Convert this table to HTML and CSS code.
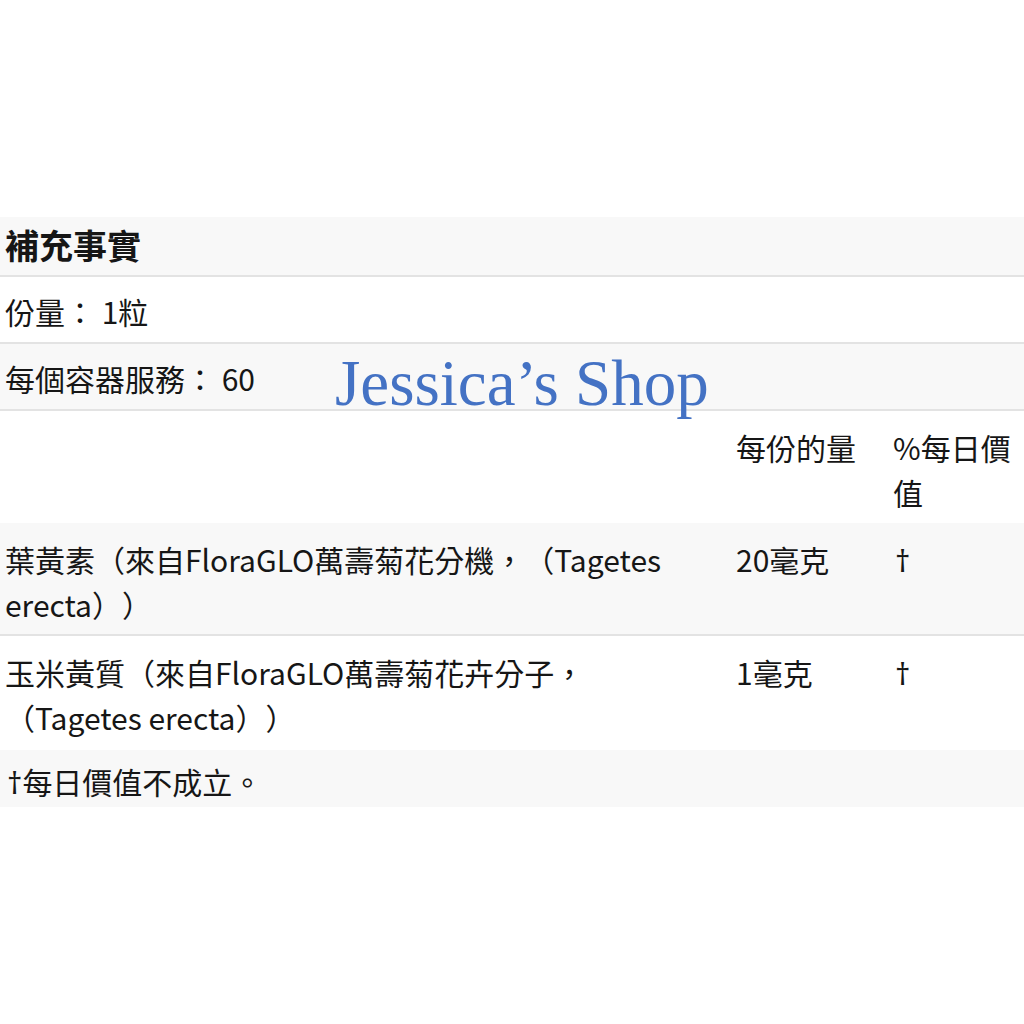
FILE: index.html
```html
<!DOCTYPE html>
<html lang="zh-Hant">
<head>
    <meta charset="UTF-8">
    <meta name="viewport" content="width=device-width, initial-scale=1.0">
    <title>補充事實</title>
    <link rel="stylesheet" href="styles.css">
</head>
<body>

    <div class="page">
        <table class="facts">
            <colgroup>
                <col class="col-name">
                <col class="col-amount">
                <col class="col-dv">
            </colgroup>
            <tr class="row-title shaded">
                <td colspan="3">補充事實</td>
            </tr>
            <tr class="row-info">
                <td colspan="3">份量： 1粒</td>
            </tr>
            <tr class="row-info shaded">
                <td colspan="3">每個容器服務： 60</td>
            </tr>
            <tr class="row-head">
                <td></td>
                <td>每份的量</td>
                <td>%每日價值</td>
            </tr>
            <tr class="row-item shaded lined">
                <td class="name">葉黃素（來自FloraGLO萬壽菊花分機，（Tagetes erecta））</td>
                <td>20毫克</td>
                <td><span class="dagger">†</span></td>
            </tr>
            <tr class="row-item last">
                <td class="name">玉米黃質（來自FloraGLO萬壽菊花卉分子，（Tagetes erecta））</td>
                <td>1毫克</td>
                <td><span class="dagger">†</span></td>
            </tr>
            <tr class="row-note shaded">
                <td colspan="3"><span class="dagger">†</span>每日價值不成立。</td>
            </tr>
        </table>

        <!-- shop watermark sits over the table -->
        <div class="watermark">Jessica’s Shop</div>
    </div>

</body>
</html>
```

FILE: styles.css
```css
* {
    margin: 0;
    padding: 0;
    box-sizing: border-box;
}
body {
    font-family: "Noto Sans CJK TC", "Noto Sans", sans-serif;
    background-color: #ffffff;
    color: #161616;
}
.page {
    position: relative;
    width: 1024px;
    height: 1024px;
    padding-top: 217px;
    overflow: hidden;
}
.facts {
    width: 1024px;
    border-collapse: collapse;
    table-layout: fixed;
    font-size: 30px;
    line-height: 45px;
    text-spacing-trim: space-all;
}
.col-name {
    width: 731px;
}
.col-amount {
    width: 157px;
}
.col-dv {
    width: 136px;
}
.facts td {
    padding: 0 5px;
    vertical-align: top;
}
.facts td.name {
    padding-right: 20px;
}
.facts tr.shaded {
    background-color: #f8f8f8;
}
.dagger {
    font-family: "Noto Sans", sans-serif;
    padding-left: 2px;
}
.row-title td {
    font-size: 34px;
    font-weight: bold;
    padding-top: 5px;
    padding-bottom: 8px;
    border-bottom: 2px solid #e3e3e3;
}
.row-info td {
    padding-top: 12px;
    padding-bottom: 8px;
    border-bottom: 2px solid #e3e3e3;
}
.row-head td {
    padding-top: 14px;
    padding-bottom: 8px;
}
.row-item td {
    padding-top: 14px;
    padding-bottom: 8px;
}
.row-item.lined td {
    padding-bottom: 7px;
    border-bottom: 2px solid #e3e3e3;
}
.row-item.last td {
    padding-bottom: 10px;
}
.row-note td {
    padding-top: 9px;
    padding-bottom: 2px;
}
.watermark {
    position: absolute;
    left: 335px;
    top: 351px;
    font-family: "Liberation Serif", serif;
    font-size: 65px;
    line-height: 1;
    color: #4472c4;
    white-space: nowrap;
}
```
